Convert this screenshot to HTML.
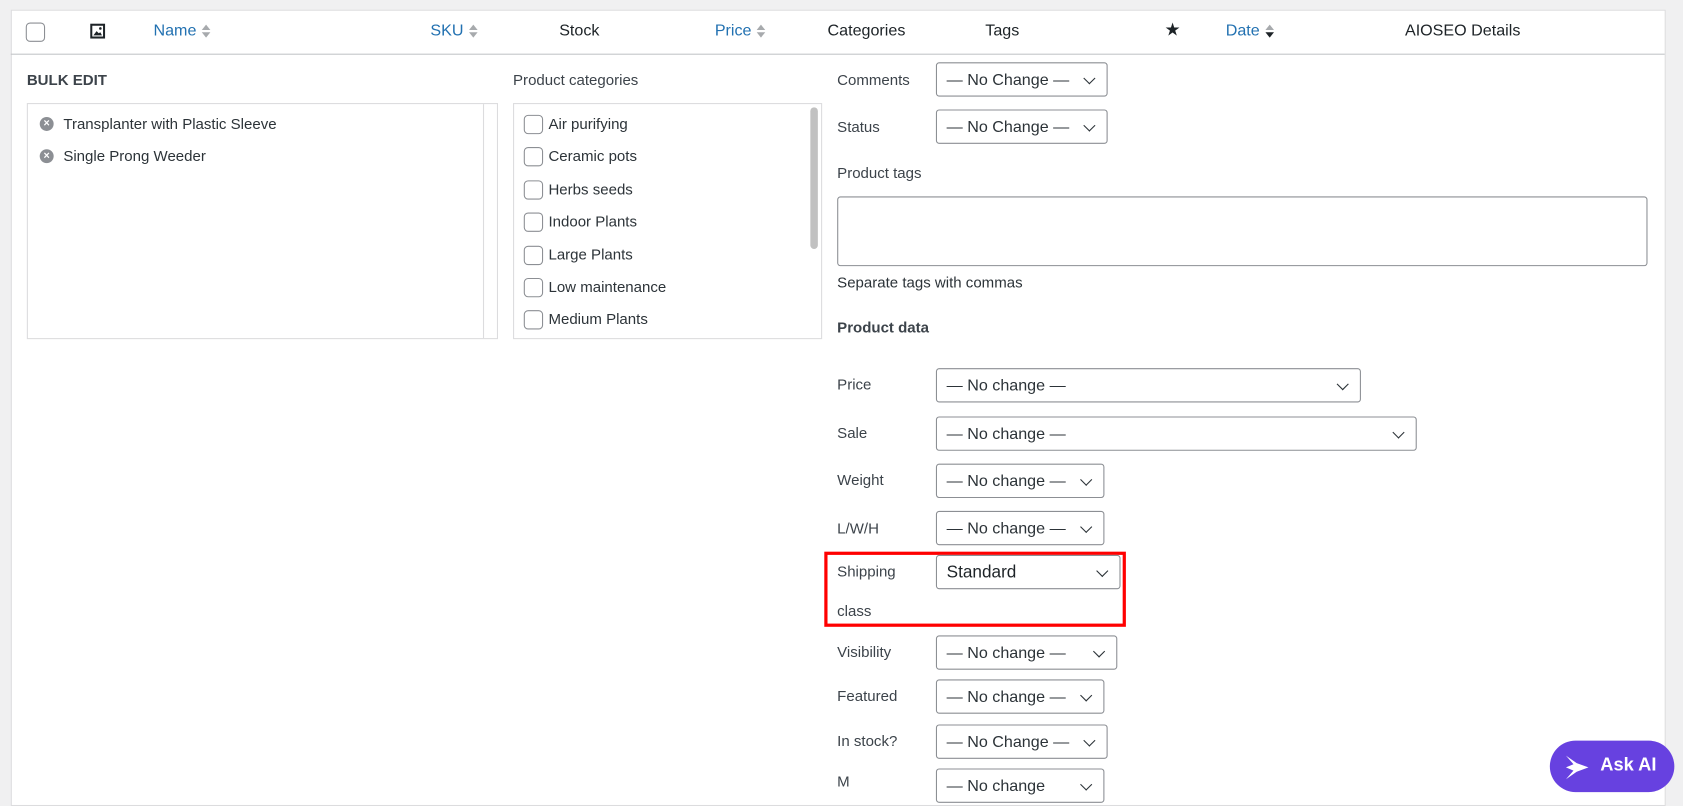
<!DOCTYPE html>
<html><head><meta charset="utf-8"><style>
html,body{margin:0;padding:0;width:1683px;height:781px;overflow:hidden;background:#f0f0f1;}
#w{position:absolute;left:0;top:0;width:1568px;height:728px;transform:scale(1.0733);transform-origin:0 0;font-family:"Liberation Sans",sans-serif;font-size:14px;color:#3c434a;}
.a{position:absolute;white-space:nowrap;}
.panel{position:absolute;left:10px;top:9px;width:1540px;height:740px;background:#fff;border:1px solid #dcdcde;}
.hdr{position:absolute;left:10px;top:50px;width:1541px;height:1px;background:#c3c4c7;}
.h{top:20px;font-size:15px;color:#1d2327;}
.h.blue{color:#2271b1;}
.sort{display:inline-block;vertical-align:middle;margin-left:5px;width:8px;}
.sort i{display:block;width:0;height:0;border-left:4px solid transparent;border-right:4px solid transparent;}
.up{border-bottom:5px solid #a7aaad;margin-bottom:2px}
.dn{border-top:5px solid #a7aaad}
.sel{position:absolute;left:872px;height:32px;border:1px solid #8c8f94;border-radius:3px;background:#fff;box-sizing:border-box;font-size:15px;color:#2c3338;line-height:32px;padding-left:9px;}
.sel:after{content:"";position:absolute;right:12px;top:10px;width:7px;height:7px;border-right:1.5px solid #2c3338;border-bottom:1.5px solid #2c3338;transform:rotate(45deg);}
.lbl{position:absolute;left:780px;font-size:14px;color:#3c434a;}
.cb{position:absolute;left:488px;width:16px;height:16px;border:1px solid #8c8f94;border-radius:4px;background:#fff;}
.ci{position:absolute;left:511px;font-size:14px;color:#2c3338;}
.x{position:absolute;left:37px;width:13px;height:13px;border-radius:50%;background:#8c8f94;color:#fff;font-size:10px;line-height:13px;text-align:center;font-weight:bold;}
</style></head><body><div id="w">
<div class="panel"></div>
<div class="hdr"></div>
<div class="a" style="left:24px;top:21px;width:16px;height:16px;border:1px solid #8c8f94;border-radius:4px;background:#fff"></div>
<svg class="a" style="left:84px;top:22px" width="14" height="14" viewBox="0 0 14 14"><rect x="1" y="1" width="12" height="12" fill="none" stroke="#1d2327" stroke-width="2"/><path d="M3 11 L6 7 L8 9 L9.5 8 L11 11Z" fill="#1d2327"/><circle cx="9.5" cy="4.5" r="1.2" fill="#1d2327"/></svg>
<div class="a h blue" style="left:143px">Name<span class="sort"><i class="up"></i><i class="dn"></i></span></div>
<div class="a h blue" style="left:401px">SKU<span class="sort"><i class="up"></i><i class="dn"></i></span></div>
<div class="a h" style="left:521px">Stock</div>
<div class="a h blue" style="left:666px">Price<span class="sort"><i class="up"></i><i class="dn"></i></span></div>
<div class="a h" style="left:771px">Categories</div>
<div class="a h" style="left:918px">Tags</div>
<div class="a h" style="left:1085px;font-size:17px;top:18px">★</div>
<div class="a h blue" style="left:1142px">Date<span class="sort"><i class="up"></i><i class="dn" style="border-top-color:#1d2327"></i></span></div>
<div class="a h" style="left:1309px">AIOSEO Details</div>

<div class="a" style="left:25px;top:66px;font-weight:bold;color:#3c434a">BULK EDIT</div>
<div class="a" style="left:478px;top:66px">Product categories</div>
<div class="a" style="left:25px;top:96px;width:437px;height:218px;border:1px solid #dcdcde"></div>
<div class="a" style="left:450px;top:97px;width:1px;height:218px;background:#dcdcde"></div>
<div class="x" style="top:109px">×</div><div class="a" style="left:59px;top:107px;color:#2c3338">Transplanter with Plastic Sleeve</div>
<div class="x" style="top:139px">×</div><div class="a" style="left:59px;top:137px;color:#2c3338">Single Prong Weeder</div>
<div class="a" style="left:478px;top:96px;width:286px;height:218px;border:1px solid #dcdcde"></div>
<div class="a" style="left:755px;top:100px;width:7px;height:132px;background:#c1c1c1;border-radius:4px"></div>
<div class="cb" style="top:107px"></div><div class="ci" style="top:107px">Air purifying</div>
<div class="cb" style="top:137px"></div><div class="ci" style="top:137px">Ceramic pots</div>
<div class="cb" style="top:168px"></div><div class="ci" style="top:168px">Herbs seeds</div>
<div class="cb" style="top:198px"></div><div class="ci" style="top:198px">Indoor Plants</div>
<div class="cb" style="top:229px"></div><div class="ci" style="top:229px">Large Plants</div>
<div class="cb" style="top:259px"></div><div class="ci" style="top:259px">Low maintenance</div>
<div class="cb" style="top:289px"></div><div class="ci" style="top:289px">Medium Plants</div>

<div class="lbl" style="top:66px">Comments</div><div class="sel" style="top:58px;width:160px">— No Change —</div>
<div class="lbl" style="top:110px">Status</div><div class="sel" style="top:102px;width:160px">— No Change —</div>
<div class="lbl" style="top:153px">Product tags</div>
<div class="a" style="left:780px;top:183px;width:755px;height:65px;border:1px solid #8c8f94;border-radius:3px;box-sizing:border-box;background:#fff"></div>
<div class="lbl" style="top:255px;color:#2c3338">Separate tags with commas</div>
<div class="lbl" style="top:297px;font-weight:bold">Product data</div>
<div class="lbl" style="top:350px">Price</div><div class="sel" style="top:343px;width:396px">— No change —</div>
<div class="lbl" style="top:395px">Sale</div><div class="sel" style="top:388px;width:448px">— No change —</div>
<div class="lbl" style="top:439px">Weight</div><div class="sel" style="top:432px;width:157px">— No change —</div>
<div class="lbl" style="top:484px">L/W/H</div><div class="sel" style="top:476px;width:157px">— No change —</div>
<div class="a" style="left:768px;top:514px;width:281px;height:70px;border:3px solid #f00;box-sizing:border-box"></div>
<div class="lbl" style="top:524px">Shipping</div><div class="lbl" style="top:561px">class</div>
<div class="sel" style="top:517px;width:172px;font-size:16px;color:#1d2327">Standard</div>
<div class="lbl" style="top:599px">Visibility</div><div class="sel" style="top:592px;width:169px">— No change —</div>
<div class="lbl" style="top:640px">Featured</div><div class="sel" style="top:633px;width:157px">— No change —</div>
<div class="lbl" style="top:682px">In stock?</div><div class="sel" style="top:675px;width:160px">— No Change —</div>
<div class="lbl" style="top:720px">M</div><div class="sel" style="top:716px;width:157px">— No change</div>

<div class="a" style="left:1444px;top:690px;width:116px;height:48px;border-radius:24px;background:#6741e0;color:#fff;font-weight:bold;font-size:17px">
<svg style="position:absolute;left:12px;top:12px" width="26" height="26" viewBox="0 0 26 26"><path d="M3 2 L10 10 L3 13 L10 16 L3 24 L13 17 L24 13 L13 9Z" fill="#fff"/></svg>
<span style="position:absolute;left:47px;top:13px">Ask AI</span></div>
</div></body></html>
